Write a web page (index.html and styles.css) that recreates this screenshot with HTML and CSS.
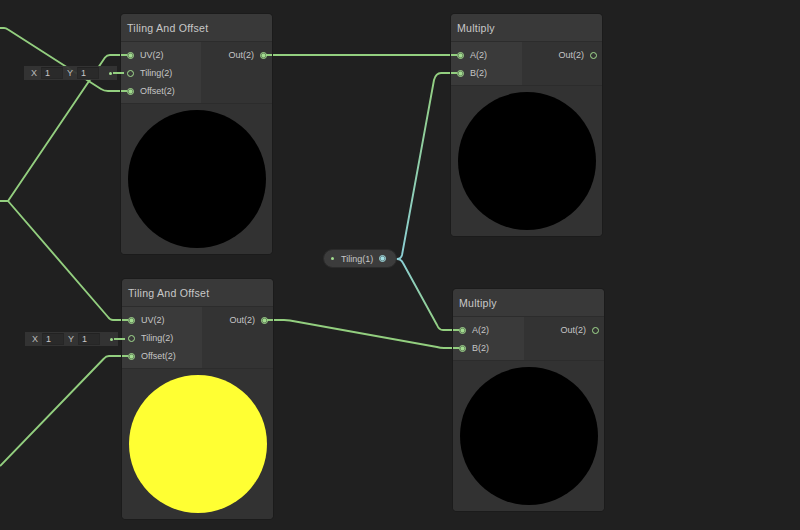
FILE: index.html
```html
<!DOCTYPE html>
<html>
<head>
<meta charset="utf-8">
<link rel="stylesheet" href="styles.css">
</head>
<body>
<div class="graph">
  <svg class="wires" width="800" height="530" viewBox="0 0 800 530">
    <defs>
      <linearGradient id="gUp" gradientUnits="userSpaceOnUse" x1="0" y1="259" x2="0" y2="73">
        <stop offset="0" stop-color="#8ccfd6"/>
        <stop offset="1" stop-color="#93cf7f"/>
      </linearGradient>
      <linearGradient id="gDown" gradientUnits="userSpaceOnUse" x1="0" y1="259" x2="0" y2="330">
        <stop offset="0" stop-color="#8ccfd6"/>
        <stop offset="1" stop-color="#93cf7f"/>
      </linearGradient>
    </defs>
    <g class="wire">
      <path d="M0 28 L4 28 Q6 28 8 29.5 L101 89 Q104 91 108 91 L125 91"/>
      <path d="M0 201 L8 201 L105 57.5 Q107 55 110 55 L125 55"/>
      <path d="M8 201 L108 317 Q110 320 113 320 L126 320"/>
      <path d="M0 466 L104 358.5 Q106 356 109 356 L126 356"/>
      <path d="M270 55 L455 55"/>
      <path d="M270 320 L284 320 Q287 320 290 320.5 L437 347 Q440 348 444 348 L457 348"/>
    </g>
    <path class="wire-c" stroke="url(#gUp)" d="M396 259 L397 259 Q401 259 402 255 L434 80 Q436 73 441 73 L455 73"/>
    <path class="wire-c" stroke="url(#gDown)" d="M396 259 L397 259 Q401 259 403 263 L437 325 Q439 330 443 330 L457 330"/>
  </svg>

  <div class="node tile-a">
    <div class="node-title">Tiling And Offset</div>
    <div class="node-ports">
      <div class="inputs wide">
        <div class="port wired"><span class="dot linked"></span><span class="label">UV(2)</span></div>
        <div class="port"><span class="dot"></span><span class="label">Tiling(2)</span></div>
        <div class="port wired"><span class="dot linked"></span><span class="label">Offset(2)</span></div>
      </div>
      <div class="outputs">
        <div class="port wired"><span class="label">Out(2)</span><span class="dot linked"></span></div>
      </div>
    </div>
    <div class="preview"><div class="sphere"></div></div>
  </div>

  <div class="node tile-b">
    <div class="node-title">Tiling And Offset</div>
    <div class="node-ports">
      <div class="inputs wide">
        <div class="port wired"><span class="dot linked"></span><span class="label">UV(2)</span></div>
        <div class="port"><span class="dot"></span><span class="label">Tiling(2)</span></div>
        <div class="port wired"><span class="dot linked"></span><span class="label">Offset(2)</span></div>
      </div>
      <div class="outputs">
        <div class="port wired"><span class="label">Out(2)</span><span class="dot linked"></span></div>
      </div>
    </div>
    <div class="preview"><div class="sphere lit"></div></div>
  </div>

  <div class="node mul-a">
    <div class="node-title">Multiply</div>
    <div class="node-ports">
      <div class="inputs narrow">
        <div class="port wired"><span class="dot linked"></span><span class="label">A(2)</span></div>
        <div class="port wired"><span class="dot linked"></span><span class="label">B(2)</span></div>
      </div>
      <div class="outputs">
        <div class="port"><span class="label">Out(2)</span><span class="dot"></span></div>
      </div>
    </div>
    <div class="preview"><div class="sphere"></div></div>
  </div>

  <div class="node mul-b">
    <div class="node-title">Multiply</div>
    <div class="node-ports">
      <div class="inputs narrow">
        <div class="port wired"><span class="dot linked"></span><span class="label">A(2)</span></div>
        <div class="port wired"><span class="dot linked"></span><span class="label">B(2)</span></div>
      </div>
      <div class="outputs">
        <div class="port"><span class="label">Out(2)</span><span class="dot"></span></div>
      </div>
    </div>
    <div class="preview"><div class="sphere"></div></div>
  </div>

  <div class="inline inline-a">
    <div class="inline-box">
      <span class="axis">X</span><span class="field">1</span>
      <span class="axis">Y</span><span class="field">1</span>
      <span class="small-dot"></span>
    </div>
    <span class="connector"></span>
  </div>

  <div class="inline inline-b">
    <div class="inline-box">
      <span class="axis">X</span><span class="field">1</span>
      <span class="axis">Y</span><span class="field">1</span>
      <span class="small-dot"></span>
    </div>
    <span class="connector"></span>
  </div>

  <div class="prop">
    <span class="small-dot"></span>
    <span class="prop-label">Tiling(1)</span>
    <span class="dot linked cyan"></span>
  </div>
</div>
</body>
</html>
```

FILE: styles.css
```css
html, body {
  margin: 0;
  padding: 0;
  background: #202020;
}

body {
  font-family: "Liberation Sans", Arial, sans-serif;
}

.graph {
  position: relative;
  width: 800px;
  height: 530px;
  overflow: hidden;
  background: #202020;
}

.wires {
  position: absolute;
  left: 0;
  top: 0;
  z-index: 0;
}

.wire path {
  fill: none;
  stroke: #93cf7f;
  stroke-width: 1.9;
  stroke-linejoin: round;
}

.wire-c {
  fill: none;
  stroke-width: 1.9;
  stroke-linejoin: round;
}

/* nodes on the free canvas */
.node {
  position: absolute;
  width: 151px;
  background: #323232;
  border-radius: 4px;
  box-shadow: 0 0 0 1px #1b1b1b;
  overflow: hidden;
  z-index: 1;
}

.tile-a { left: 121px; top: 14px; }
.tile-b { left: 122px; top: 279px; }
.mul-a  { left: 451px; top: 14px; }
.mul-b  { left: 453px; top: 289px; }

.node-title {
  height: 27px;
  line-height: 28px;
  padding-left: 6px;
  font-size: 10.6px;
  color: #c8c8c8;
  background: #393939;
  border-bottom: 1px solid #2c2c2c;
  letter-spacing: 0.25px;
}

.node-ports {
  display: flex;
}

.inputs {
  background: #3a3a3a;
  padding: 4px 0 3px;
}

.inputs.wide { width: 80px; }
.inputs.narrow { width: 71px; }

.outputs {
  flex: 1;
  background: #333333;
  padding: 4px 0 3px;
}

.port {
  position: relative;
  height: 18px;
  display: flex;
  align-items: center;
  font-size: 9px;
  color: #c6c6c6;
}

.inputs .port {
  padding-left: 5.5px;
  gap: 6.5px;
}

.outputs .port {
  justify-content: flex-end;
  padding-right: 5.5px;
  gap: 5.5px;
}

.inputs .port.wired::before {
  content: "";
  position: absolute;
  left: 0;
  top: 8px;
  width: 6px;
  height: 2px;
  background: #93cf7f;
}

.outputs .port.wired::after {
  content: "";
  position: absolute;
  right: 0;
  top: 8px;
  width: 6px;
  height: 2px;
  background: #93cf7f;
}

.dot {
  position: relative;
  z-index: 1;
  flex: none;
  width: 7px;
  height: 7px;
  box-sizing: border-box;
  border: 1.3px solid #a2dc8f;
  border-radius: 50%;
}

.dot.linked {
  background: radial-gradient(circle, #a2dc8f 0 1.7px, #7aa66c 2px, transparent 2.4px);
}

.dot.cyan {
  border-color: #a3dfe3;
  background: radial-gradient(circle, #a3dfe3 0 1.7px, #78a8ac 2px, transparent 2.4px);
}

.preview {
  height: 150px;
  border-top: 1px solid #2c2c2c;
  display: flex;
  align-items: center;
  justify-content: center;
  background: #323232;
}

.sphere {
  width: 138px;
  height: 138px;
  border-radius: 50%;
  background: #000000;
}

.sphere.lit {
  background: #ffff33;
}

/* inline vector input */
.inline {
  position: absolute;
  display: flex;
  align-items: center;
  z-index: 3;
}

.inline-a { left: 24px; top: 66px; }
.inline-b { left: 25px; top: 332px; }

.inline-box {
  display: flex;
  align-items: center;
  width: 93px;
  height: 14px;
  box-sizing: border-box;
  padding-left: 7px;
  background: rgba(52, 52, 52, 0.94);
  font-size: 9px;
  color: #bdbdbd;
}

.axis {
  width: 5px;
  margin-right: 5px;
}

.field {
  width: 22px;
  height: 12px;
  box-sizing: border-box;
  line-height: 11px;
  padding-left: 3px;
  margin-right: 4px;
  background: #2a2a2a;
  border: 1px solid #262626;
  border-top-color: #222;
  color: #c8c8c8;
}

.small-dot {
  flex: none;
  width: 3px;
  height: 3px;
  border-radius: 50%;
  background: #a2dc8f;
}

.inline-box .small-dot {
  margin-left: 5.5px;
}

.connector {
  width: 11px;
  height: 1.3px;
  margin-left: -4px;
  background: #93cf7f;
}

/* property pill */
.prop {
  position: absolute;
  left: 323px;
  top: 249px;
  width: 74px;
  height: 19px;
  box-sizing: border-box;
  border-radius: 10px;
  border: 1px solid #2b2b2b;
  background: #3c3c3c;
  display: flex;
  align-items: center;
  padding-left: 6.5px;
  font-size: 9px;
  color: #c6c6c6;
  z-index: 2;
}

.prop .small-dot {
  margin-right: 7.5px;
}

.prop-label {
  margin-right: 6px;
}
```
